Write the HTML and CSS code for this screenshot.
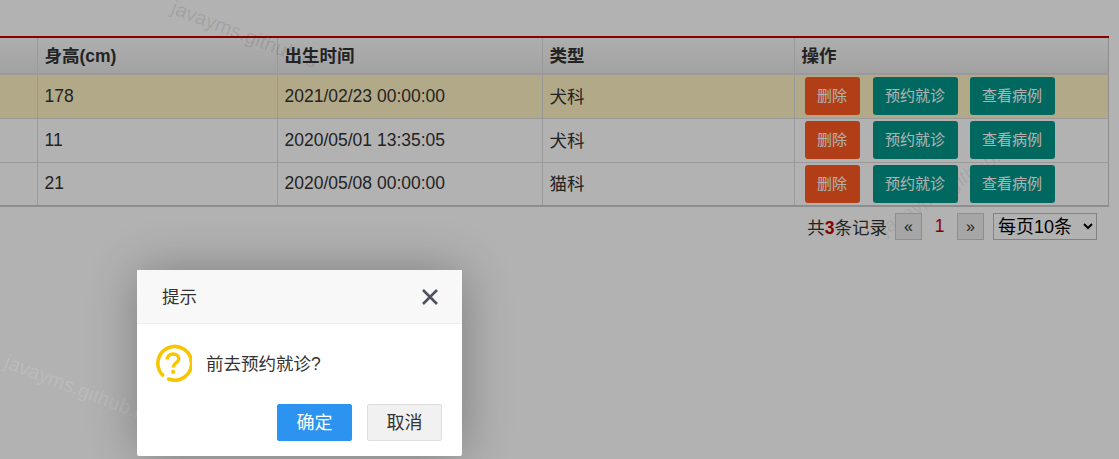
FILE: index.html
```html
<!DOCTYPE html>
<html lang="zh-CN">
<head>
    <meta charset="UTF-8">
    <title>预约就诊</title>
    <link rel="stylesheet" href="styles.css">
</head>
<body>
    <div class="watermark wm-right">javayms.github.io</div>

    <div class="page">
        <table class="data-table">
            <colgroup>
                <col class="col-first">
                <col class="col-height">
                <col class="col-birth">
                <col class="col-type">
                <col class="col-actions">
            </colgroup>
            <thead>
                <tr>
                    <th></th>
                    <th>身高(cm)</th>
                    <th>出生时间</th>
                    <th>类型</th>
                    <th>操作</th>
                </tr>
            </thead>
            <tbody>
                <tr class="selected">
                    <td></td>
                    <td>178</td>
                    <td>2021/02/23 00:00:00</td>
                    <td class="cell-type">犬科</td>
                    <td>
                        <div class="actions">
                            <button class="btn btn-danger">删除</button>
                            <button class="btn btn-teal">预约就诊</button>
                            <button class="btn btn-teal">查看病例</button>
                        </div>
                    </td>
                </tr>
                <tr>
                    <td></td>
                    <td>11</td>
                    <td>2020/05/01 13:35:05</td>
                    <td class="cell-type">犬科</td>
                    <td>
                        <div class="actions">
                            <button class="btn btn-danger">删除</button>
                            <button class="btn btn-teal">预约就诊</button>
                            <button class="btn btn-teal">查看病例</button>
                        </div>
                    </td>
                </tr>
                <tr>
                    <td></td>
                    <td>21</td>
                    <td>2020/05/08 00:00:00</td>
                    <td class="cell-type">猫科</td>
                    <td>
                        <div class="actions">
                            <button class="btn btn-danger">删除</button>
                            <button class="btn btn-teal">预约就诊</button>
                            <button class="btn btn-teal">查看病例</button>
                        </div>
                    </td>
                </tr>
            </tbody>
        </table>

        <div class="pager">
            <span class="pager-total">共<b>3</b>条记录</span>
            <a class="pager-btn">«</a>
            <span class="pager-current">1</span>
            <a class="pager-btn">»</a>
            <select class="pager-size">
                <option>每页10条</option>
            </select>
        </div>
    </div>

    <div class="watermark wm-top">javayms.github.io</div>

    <div class="shade"></div>

    <div class="watermark wm-left">javayms.github.io</div>

    <div class="dialog">
        <div class="dialog-title">
            <span>提示</span>
            <svg class="dialog-close" viewBox="0 0 16 16" width="16" height="16">
                <path d="M1 1 L15 15 M15 1 L1 15" stroke="#4f5160" stroke-width="2.6" fill="none"/>
            </svg>
        </div>
        <div class="dialog-body">
            <svg class="dialog-icon" viewBox="0 0 38 38" width="38" height="38">
                <path d="M8.6 31 A16.8 16.8 0 1 1 14.6 35" stroke="#f7c600" stroke-width="3.6" fill="none" stroke-linecap="round"/>
                <path d="M13.2 15.4 C13.2 12 15.8 10 19 10 C22.2 10 24.8 12 24.8 15 C24.8 18.8 19.2 18.8 19.2 23.4" stroke="#f7c600" stroke-width="3.4" fill="none"/>
                <circle cx="19.2" cy="27.8" r="2.1" fill="#f7c600"/>
            </svg>
            <span>前去预约就诊?</span>
        </div>
        <div class="dialog-buttons">
            <button class="dialog-btn dialog-btn-primary">确定</button>
            <button class="dialog-btn">取消</button>
        </div>
    </div>
</body>
</html>
```

FILE: styles.css
```css
* {
    box-sizing: border-box;
}

html, body {
    height: 100%;
}

body {
    margin: 0;
    overflow: hidden;
    background-color: #fff;
    color: #333;
    font-family: "Liberation Sans", "Noto Sans CJK SC", sans-serif;
    font-size: 17.5px;
}

.page {
    padding-top: 36px;
    width: 1108px;
}

.data-table {
    width: 1108px;
    table-layout: fixed;
    border-collapse: collapse;
    border-top: 2px solid #c40000;
    border-right: 1px solid #ccc;
    border-bottom: 2px solid #ccc;
}

.col-first { width: 37px; }
.col-height { width: 240px; }
.col-birth { width: 265px; }
.col-type { width: 252px; }
.col-actions { width: 314px; }

th, td {
    text-align: left;
    border-left: 1px solid #ddd;
    padding: 0 7px;
}

th:first-child, td:first-child {
    border-left: none;
}

th {
    height: 37px;
    padding-bottom: 2px;
    font-weight: bold;
    border-bottom: 2px solid #ddd;
    background: linear-gradient(#fafafa, #e8e8e8);
}

td {
    height: 44px;
    border-bottom: 1px solid #ddd;
}

td.cell-type {
    padding-bottom: 2px;
}

tbody tr:last-child td {
    border-bottom: none;
}

.selected td {
    background-color: #fff3c4;
}

.actions {
    display: flex;
    gap: 12px;
    padding-left: 3px;
}

.btn {
    height: 38px;
    width: 85px;
    border: none;
    border-radius: 3px;
    color: #fff;
    font-family: inherit;
    font-size: 15px;
    padding: 0 0 3px;
}

.btn-danger {
    width: 55px;
    background-color: #ff5a22;
}

.btn-danger + .btn {
    margin-left: 1px;
}

.btn-teal {
    background-color: #009688;
}

.pager {
    display: flex;
    align-items: center;
    justify-content: flex-end;
    height: 27px;
    margin-top: 6px;
    padding-right: 11px;
}

.pager-total b {
    color: #c40000;
}

.pager-btn {
    display: flex;
    align-items: center;
    justify-content: center;
    width: 27px;
    height: 27px;
    margin-left: 8px;
    border: 1px solid #ccc;
    background-color: #eee;
    font-size: 16px;
}

.pager-current {
    width: 35px;
    text-align: center;
    color: #c40000;
}

.pager-current + .pager-btn {
    margin-left: 0;
}

.pager-size {
    width: 104px;
    height: 27px;
    margin-left: 9px;
    padding: 0;
    border: 1px solid #bbb;
    background-color: #fff;
    color: #000;
    font-family: inherit;
    font-size: 18px;
}

.watermark {
    position: absolute;
    transform-origin: left top;
    transform: rotate(21deg);
    font-size: 20px;
    line-height: 14px;
    white-space: nowrap;
    pointer-events: none;
}

.wm-top {
    left: 175px;
    top: 0;
    color: rgba(0, 0, 0, 0.1);
}

.wm-left {
    left: 8px;
    top: 354px;
    color: rgba(255, 255, 255, 0.13);
}

.wm-right {
    left: 878px;
    top: 224px;
    z-index: -1;
    transform: rotate(-33deg);
    color: rgba(0, 0, 0, 0.08);
}

.shade {
    position: absolute;
    inset: 0;
    background-color: rgba(0, 0, 0, 0.3);
}

.dialog {
    position: absolute;
    left: 137px;
    top: 270px;
    width: 325px;
    height: 186px;
    border-radius: 2px;
    background-color: #fff;
    box-shadow: 1px 1px 50px rgba(0, 0, 0, 0.3);
    font-size: 17.5px;
}

.dialog-title {
    display: flex;
    align-items: center;
    justify-content: space-between;
    height: 54px;
    padding: 0 24px 3px 25px;
    border-bottom: 1px solid #eee;
    background-color: #f8f8f8;
}

.dialog-close {
    margin-top: 3px;
}

.dialog-body {
    display: flex;
    align-items: center;
    gap: 14px;
    height: 80px;
    padding: 0 0 3px 17px;
}

.dialog-buttons {
    display: flex;
    justify-content: flex-end;
    gap: 15px;
    padding-right: 20px;
}

.dialog-btn {
    width: 75px;
    height: 37px;
    border: 1px solid #dedede;
    border-radius: 2px;
    background-color: #f1f1f1;
    color: #333;
    font-family: inherit;
    font-size: 18px;
    padding: 0 0 3px;
}

.dialog-btn-primary {
    border-color: #2d93f0;
    background-color: #2d93f0;
    color: #fff;
}
```
